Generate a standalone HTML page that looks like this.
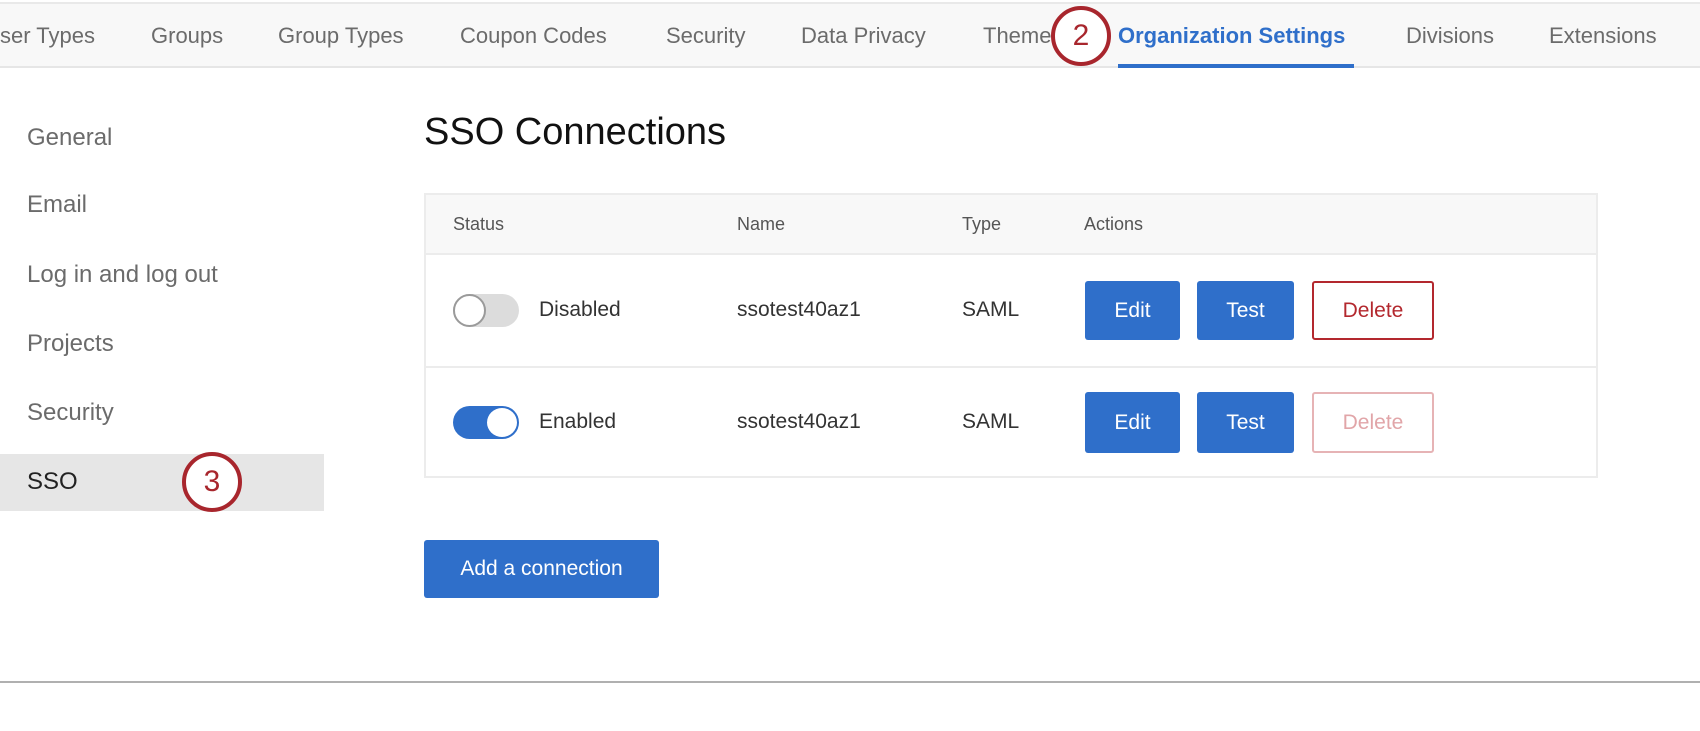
<!DOCTYPE html>
<html><head><style>
*{margin:0;padding:0;box-sizing:border-box}
body{width:1700px;height:731px;background:#fff;font-family:"Liberation Sans",sans-serif;position:relative;overflow:hidden;color:#333}
.abs{position:absolute;white-space:nowrap}
.nav{position:absolute;left:0;top:2px;width:1700px;height:66px;background:#f8f8f8;border-top:2px solid #e9e9e9;border-bottom:2px solid #e6e6e6}
.tab{position:absolute;top:23px;font-size:22px;color:#6b6b6b;line-height:26px}
.circle{position:absolute;width:60px;height:60px;border:4px solid #a8262d;border-radius:50%;background:#fff;color:#a8262d;font-size:30px;line-height:52px;text-align:center}
.side{position:absolute;left:27px;font-size:24px;color:#6b6b6b;line-height:28px}
.th{position:absolute;top:214px;font-size:18px;color:#555;line-height:20px}
.cell{position:absolute;font-size:21px;color:#333;line-height:24px}
.btn{position:absolute;background:#2f6fca;color:#fff;border-radius:3px;font-size:21px;text-align:center}
.del{position:absolute;border:2px solid #b3282e;color:#b3282e;border-radius:3px;font-size:21px;text-align:center;background:#fff}
</style></head><body>
<div class="nav"></div>
<div class="tab" style="left:0">ser Types</div>
<div class="tab" style="left:151px">Groups</div>
<div class="tab" style="left:278px">Group Types</div>
<div class="tab" style="left:460px">Coupon Codes</div>
<div class="tab" style="left:666px">Security</div>
<div class="tab" style="left:801px">Data Privacy</div>
<div class="tab" style="left:983px">Theme</div>
<div class="tab" style="left:1118px;color:#2f6fca;font-weight:bold;font-size:22px">Organization Settings</div>
<div class="abs" style="left:1118px;top:64px;width:236px;height:4px;background:#2f6fca"></div>
<div class="tab" style="left:1406px">Divisions</div>
<div class="tab" style="left:1549px">Extensions</div>
<div class="circle" style="left:1051px;top:6px">2</div>

<div class="side" style="top:124px">General</div>
<div class="side" style="top:191px">Email</div>
<div class="side" style="top:261px">Log in and log out</div>
<div class="side" style="top:330px">Projects</div>
<div class="side" style="top:399px">Security</div>
<div class="abs" style="left:0;top:454px;width:324px;height:57px;background:#e6e6e6"></div>
<div class="side" style="top:468px;color:#222">SSO</div>
<div class="circle" style="left:182px;top:452px">3</div>

<div class="abs" style="left:424px;top:111px;font-size:38px;color:#111;line-height:42px">SSO Connections</div>

<div class="abs" style="left:424px;top:193px;width:1174px;height:285px;border:2px solid #ececec;background:#fff"></div>
<div class="abs" style="left:426px;top:195px;width:1170px;height:60px;background:#f8f8f8;border-bottom:2px solid #ececec"></div>
<div class="abs" style="left:426px;top:366px;width:1170px;height:2px;background:#ececec"></div>
<div class="th" style="left:453px">Status</div>
<div class="th" style="left:737px">Name</div>
<div class="th" style="left:962px">Type</div>
<div class="th" style="left:1084px">Actions</div>

<div class="abs" style="left:453px;top:294px;width:66px;height:33px;border-radius:17px;background:#dcdcdc"></div>
<div class="abs" style="left:453px;top:294px;width:33px;height:33px;border-radius:50%;background:#fff;border:2px solid #9a9a9a"></div>
<div class="cell" style="left:539px;top:298px">Disabled</div>
<div class="cell" style="left:737px;top:298px">ssotest40az1</div>
<div class="cell" style="left:962px;top:298px">SAML</div>
<div class="btn" style="left:1085px;top:281px;width:95px;height:59px;line-height:59px">Edit</div>
<div class="btn" style="left:1197px;top:281px;width:97px;height:59px;line-height:59px">Test</div>
<div class="del" style="left:1312px;top:281px;width:122px;height:59px;line-height:55px">Delete</div>

<div class="abs" style="left:453px;top:406px;width:66px;height:33px;border-radius:17px;background:#2f6fca"></div>
<div class="abs" style="left:487px;top:408px;width:30px;height:29px;border-radius:50%;background:#fff"></div>
<div class="cell" style="left:539px;top:410px">Enabled</div>
<div class="cell" style="left:737px;top:410px">ssotest40az1</div>
<div class="cell" style="left:962px;top:410px">SAML</div>
<div class="btn" style="left:1085px;top:392px;width:95px;height:61px;line-height:61px">Edit</div>
<div class="btn" style="left:1197px;top:392px;width:97px;height:61px;line-height:61px">Test</div>
<div class="del" style="left:1312px;top:392px;width:122px;height:61px;line-height:57px;border-color:#e6b3b5;color:#e1a5a8">Delete</div>

<div class="btn" style="left:424px;top:540px;width:235px;height:58px;line-height:58px">Add a connection</div>

<div class="abs" style="left:0;top:681px;width:1700px;height:2px;background:#b0b0b0"></div>
</body></html>
